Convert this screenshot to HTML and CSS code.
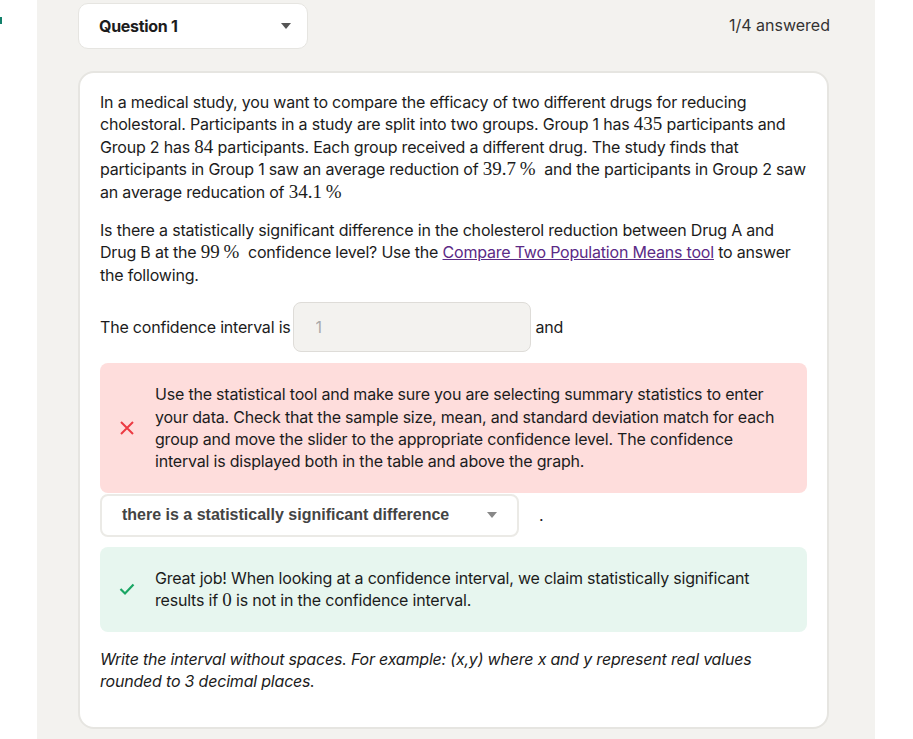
FILE: index.html
```html
<!DOCTYPE html>
<html lang="en">
<head>
    <title>Question 1</title>
    <link rel="stylesheet" href="styles.css">
</head>
<body>
    <div class="edge"><span class="edge-dot"></span></div>
    <div class="panel">
        <div class="top-row">
            <div class="question-select">
                <span>Question 1</span>
                <span class="caret"></span>
            </div>
            <div class="progress">1/4 answered</div>
        </div>
        <div class="card">
            <p>In a medical study, you want to compare the efficacy of two different drugs for reducing cholestoral. Participants in a study are split into two groups. Group 1 has <span class="math">435</span> participants and Group 2 has <span class="math">84</span> participants. Each group received a different drug. The study finds that participants in Group 1 saw an average reduction of <span class="math">39.7&thinsp;%</span>&nbsp; and the participants in Group 2 saw an average reducation of <span class="math">34.1&thinsp;%</span></p>
            <p>Is there a statistically significant difference in the cholesterol reduction between Drug A and Drug B at the <span class="math">99&thinsp;%</span>&nbsp; confidence level? Use the <a href="#">Compare Two Population Means tool</a> to answer the following.</p>
            <div class="answer-row">
                <span>The confidence interval is</span>
                <input class="interval-input" type="text" placeholder="1">
                <span>and</span>
            </div>
            <div class="feedback wrong">
                <svg class="feedback-icon" width="16" height="16" viewBox="0 0 16 16">
                    <path d="M2 2 L14 14 M14 2 L2 14" stroke="#ec3b43" stroke-width="2" fill="none"/>
                </svg>
                <div>Use the statistical tool and make sure you are selecting summary statistics to enter your data. Check that the sample size, mean, and standard deviation match for each group and move the slider to the appropriate confidence level. The confidence interval is displayed both in the table and above the graph.</div>
            </div>
            <div class="answer-row claim-row">
                <div class="claim-select">
                    <span>there is a statistically significant difference</span>
                    <span class="caret small"></span>
                </div>
                <span class="period">.</span>
            </div>
            <div class="feedback right">
                <svg class="feedback-icon" width="16" height="14" viewBox="0 0 16 14">
                    <path d="M1.5 7 L6 11.5 L14.5 2.5" stroke="#1aa664" stroke-width="2.2" fill="none"/>
                </svg>
                <div>Great job! When looking at a confidence interval, we claim statistically significant results if <span class="math">0</span> is not in the confidence interval.</div>
            </div>
            <p class="hint">Write the interval without spaces. For example: (x,y) where x and y represent real values rounded to 3 decimal places.</p>
        </div>
    </div>
</body>
</html>
```

FILE: styles.css
```css
body {
    margin: 0;
    display: flex;
    min-height: 739px;
    font-family: Inter, "Liberation Sans", sans-serif;
    color: #1c1c1c;
    background: #fff;
}

.edge {
    width: 37px;
    flex-shrink: 0;
}
.edge-dot {
    display: block;
    width: 2px;
    height: 7px;
    margin-top: 17px;
    background: #12806a;
}

.panel {
    width: 838px;
    background: #f3f2ef;
    padding: 3px 46px 10px 41px;
    box-sizing: border-box;
}

.top-row {
    display: flex;
    justify-content: space-between;
    align-items: center;
}

.question-select {
    width: 230px;
    height: 46px;
    box-sizing: border-box;
    background: #fff;
    border: 1px solid #e6e5e1;
    border-radius: 10px;
    display: flex;
    align-items: center;
    justify-content: space-between;
    padding: 0 16px 0 20px;
    font-weight: 700;
    font-size: 16px;
    letter-spacing: -0.3px;
}

.caret {
    width: 0;
    height: 0;
    border-left: 5px solid transparent;
    border-right: 5px solid transparent;
    border-top: 6px solid #555;
}
.caret.small {
    border-top-color: #888;
}

.progress {
    font-size: 16px;
    color: #333;
    margin-right: -1px;
    margin-bottom: 2px;
}

.card {
    margin-top: 22px;
    background: #fff;
    border: 2px solid #e6e5e1;
    border-radius: 16px;
    padding: 18px 20px 34px 20px;
    font-size: 16px;
    line-height: 22.4px;
    letter-spacing: -0.2px;
}

.card p {
    margin: 0 0 16px 0;
}

.math {
    font-family: "Liberation Serif", "Times New Roman", serif;
    font-size: 19px;
    line-height: 1;
    letter-spacing: 0;
}

a {
    color: #5b2a86;
}

.answer-row {
    display: flex;
    align-items: center;
    margin-bottom: 11px;
}
.claim-row {
    margin-bottom: 10px;
}

.interval-input {
    width: 238px;
    height: 50px;
    box-sizing: border-box;
    margin: 0 5px 0 2px;
    background: #f3f2ef;
    border: 1px solid #dedcd8;
    border-radius: 8px;
    padding: 0 22px;
    font-family: inherit;
    font-size: 16px;
}
.interval-input::placeholder {
    color: #aaa;
}

.feedback {
    display: flex;
    align-items: center;
    border-radius: 8px;
    padding: 20px 20px 20px 19px;
}
.feedback.wrong {
    background: #fedddc;
    margin-bottom: 1px;
}
.feedback.right {
    background: #e7f6ef;
    margin-bottom: 16px;
}
.feedback-icon {
    flex-shrink: 0;
    margin-right: 20px;
}

.claim-select {
    width: 419px;
    height: 43px;
    box-sizing: border-box;
    border: 2px solid #ebeae6;
    border-radius: 8px;
    display: flex;
    align-items: center;
    justify-content: space-between;
    padding: 0 20px;
    font-family: "Liberation Sans", Arial, sans-serif;
    font-weight: bold;
    font-size: 16px;
    letter-spacing: 0;
    color: #444;
}

.period {
    margin-left: 20px;
}

.hint {
    font-style: italic;
}
.card .hint {
    margin-bottom: 0;
}
```
